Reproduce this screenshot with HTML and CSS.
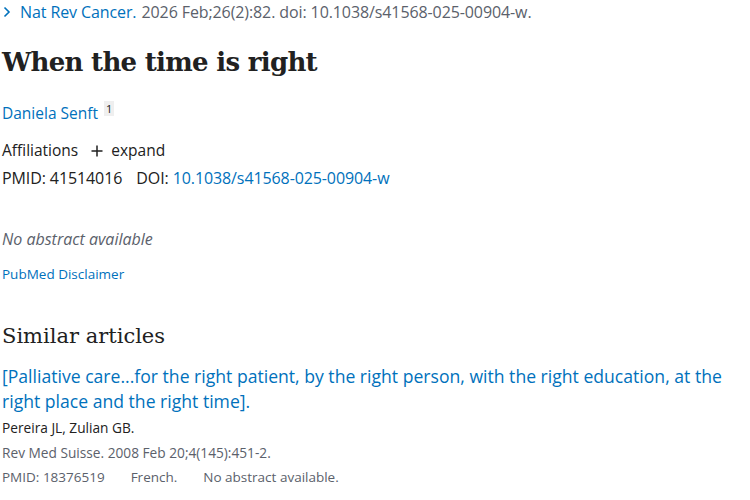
FILE: index.html
```html
<!DOCTYPE html>
<html lang="en">
<head>
<meta charset="utf-8">
<link rel="stylesheet" href="styles.css">
<title>When the time is right</title>
</head>
<body>
<main class="article">
  <div class="citation">
    <svg class="chev" width="8" height="12" viewBox="0 0 8 12"><path d="M1.5 1.5 L6 6 L1.5 10.5" fill="none" stroke="#0071bc" stroke-width="1.6"/></svg>
    <a class="journal" href="#">Nat Rev Cancer.</a>
    <span class="cit-text">2026 Feb;26(2):82. doi: 10.1038/s41568-025-00904-w.</span>
  </div>
  <h1 class="title">When the time is right</h1>
  <div class="authors"><a href="#" class="author">Daniela Senft</a> <sup class="aff-num">1</sup></div>
  <div class="affiliations">Affiliations <span class="expand"><svg class="plus" width="12" height="12" viewBox="0 0 12 12"><path d="M6 0.5 V11.5 M0.5 6 H11.5" stroke="#212121" stroke-width="1.5"/></svg> expand</span></div>
  <div class="ids">PMID: 41514016 <span class="doi-label">DOI:</span> <a href="#" class="link">10.1038/s41568-025-00904-w</a></div>
  <p class="no-abstract">No abstract available</p>
  <a class="disclaimer" href="#">PubMed Disclaimer</a>
  <h2 class="similar-heading">Similar articles</h2>
  <div class="similar">
    <a class="sim-title" href="#">[Palliative care...for the right patient, by the right person, with the right education, at the right place and the right time].</a>
    <div class="sim-authors">Pereira JL, Zulian GB.</div>
    <div class="sim-source">Rev Med Suisse. 2008 Feb 20;4(145):451-2.</div>
    <div class="sim-meta"><span>PMID: 18376519</span><span>French.</span><span>No abstract available.</span></div>
  </div>
</main>
</body>
</html>
```
FILE: styles.css
```css
html, body { margin: 0; padding: 0; background: #fff; }
body { font-family: "Open Sans", "Noto Sans", sans-serif; color: #212121; }
a { text-decoration: none; color: #0071bc; }
.article { padding: 0 0 0 2px; }
.citation { display: flex; align-items: center; font-size: 16px; line-height: 24px; letter-spacing: -0.1px; }
.chev { margin: 0 9px 0 1px; }
.journal { margin-right: 5px; }
.cit-text { color: #5b616b; }
.title { font-family: "DejaVu Serif", serif; font-weight: bold; font-size: 26px; line-height: 36px; margin: 20px 0 0; color: #212121; letter-spacing: -0.7px; }
.authors { margin-top: 17px; font-size: 15.5px; line-height: 24px; }
.aff-num { font-size: 11px; background: #efefef; padding: 0 2px; color: #212121; margin-left: 2px; }
.affiliations { margin-top: 13px; font-size: 15.5px; line-height: 24px; }
.plus { margin: 0 4px 0 9px; vertical-align: -1px; }
.ids { margin-top: 4px; font-size: 16px; line-height: 24px; letter-spacing: -0.1px; }
.doi-label { margin-left: 10px; }
.no-abstract { margin: 37px 0 0; font-style: italic; color: #5b616b; font-size: 16px; line-height: 24px; }
.disclaimer { display: block; margin-top: 13px; font-size: 13.5px; line-height: 20px; }
.similar-heading { font-family: "DejaVu Serif", serif; font-weight: normal; font-size: 21px; line-height: 30px; margin: 37px 0 0; color: #212121; }
.similar { margin-top: 13px; }
.sim-title { display: block; font-size: 17.6px; line-height: 25px; }
.sim-authors { margin-top: 1px; font-size: 13.7px; line-height: 25px; color: #212121; }
.sim-source { font-size: 13.7px; line-height: 25px; color: #5b616b; }
.sim-meta { font-size: 13.5px; line-height: 25px; color: #5b616b; display: flex; gap: 26px; }
```
